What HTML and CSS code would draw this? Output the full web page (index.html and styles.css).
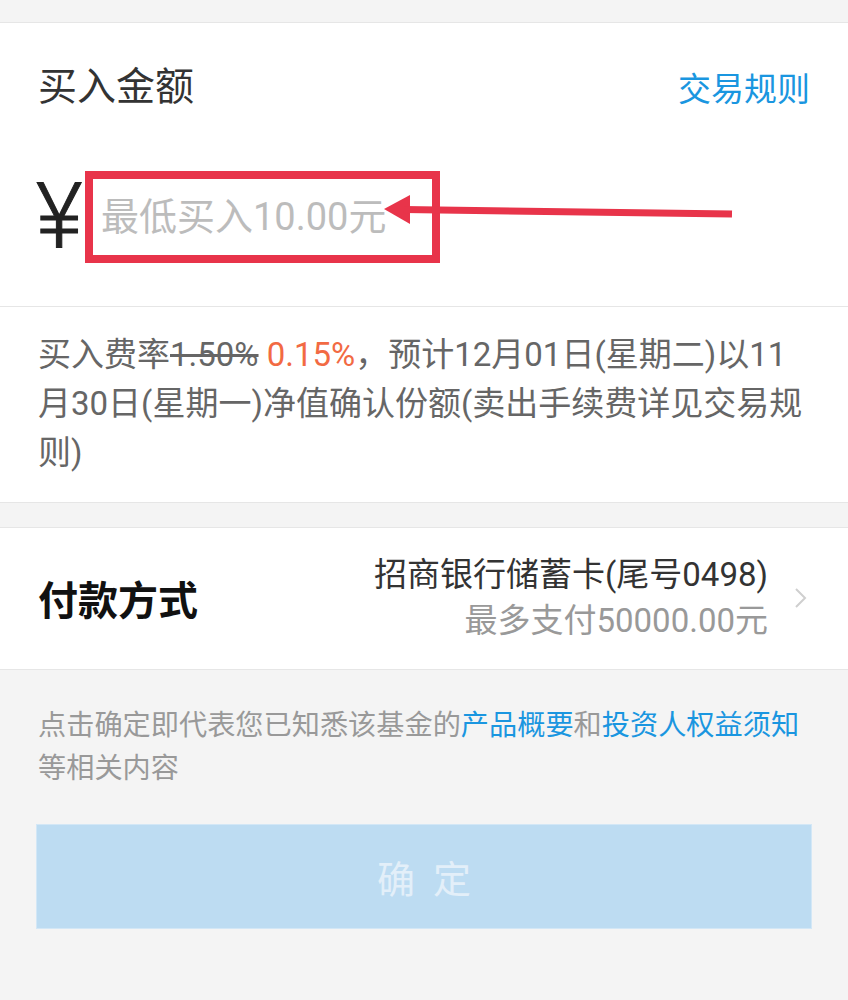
FILE: index.html
```html
<!DOCTYPE html>
<html lang="zh-CN">
<head>
    <meta charset="UTF-8">
    <meta name="viewport" content="width=device-width, initial-scale=1.0">
    <title>买入</title>
    <link rel="stylesheet" href="styles.css">
</head>
<body>
    <div class="top-gap"></div>

    <div class="card amount-card">
        <div class="title-row">
            <span class="title">买入金额</span>
            <span class="rule-link">交易规则</span>
        </div>
        <div class="amount-row">
            <span class="yen">¥</span>
            <div class="amount-input">最低买入10.00元</div>
            <svg class="arrow" width="360" height="40" viewBox="0 0 360 40">
                <polygon points="0,14 26,0 26,29" fill="#e8344a"/>
                <line x1="20" y1="14.5" x2="348" y2="19" stroke="#e8344a" stroke-width="7"/>
            </svg>
        </div>
    </div>

    <div class="card fee-card">
        买入费率<s>1.50%</s> <span class="rate">0.15%</span>，预计12月01日(星期二)以11月30日(星期一)净值确认份额(卖出手续费详见交易规则)
    </div>

    <div class="card pay-card">
        <span class="pay-label">付款方式</span>
        <div class="pay-info">
            <div class="pay-bank">招商银行储蓄卡(尾号0498)</div>
            <div class="pay-limit">最多支付50000.00元</div>
        </div>
        <svg class="chevron" width="14" height="22" viewBox="0 0 14 22">
            <polyline points="2,2 11,11 2,20" fill="none" stroke="#cfcfcf" stroke-width="2"/>
        </svg>
    </div>

    <p class="notice">点击确定即代表您已知悉该基金的<span class="link">产品概要</span>和<span class="link">投资人权益须知</span>等相关内容</p>

    <button class="confirm">确定</button>
</body>
</html>
```

FILE: styles.css
```css
body {
    margin: 0;
    background: #f4f4f4;
    font-family: Roboto, "Noto Sans CJK SC", sans-serif;
    color: #333;
}
.top-gap {
    height: 22px;
    border-bottom: 1px solid #e6e6e6;
}
.card {
    background: #fff;
    border-bottom: 1px solid #e6e6e6;
}
.amount-card {
    padding: 44px 38px 43px 38px;
}
.title-row {
    display: flex;
    justify-content: space-between;
    align-items: center;
    height: 40px;
}
.title {
    font-size: 39px;
    line-height: 40px;
    color: #333;
}
.rule-link {
    font-size: 33px;
    color: #1a96e0;
}
.amount-row {
    position: relative;
    display: flex;
    align-items: center;
    height: 92px;
    margin-top: 64px;
}
.yen {
    font-size: 90px;
    font-weight: 300;
    line-height: 92px;
    color: #222;
    width: 47px;
    margin-left: -2px;
    margin-right: 2px;
    -webkit-text-stroke: 1px #222;
}
.amount-input {
    box-sizing: border-box;
    width: 355px;
    height: 92px;
    border: 8px solid #e8344a;
    padding-left: 8px;
    font-size: 38px;
    line-height: 76px;
    color: #bcbcbc;
}
.arrow {
    position: absolute;
    left: 346px;
    top: 24px;
}
.fee-card {
    padding: 23px 38px 25px 38px;
    font-size: 33px;
    line-height: 49px;
    color: #666;
}
.fee-card s {
    text-decoration-thickness: 3px;
}
.rate {
    color: #f26a43;
}
.pay-card {
    margin-top: 24px;
    border-top: 1px solid #e6e6e6;
    padding: 24px 40px 25px 38px;
    display: flex;
    align-items: center;
}
.pay-label {
    flex: 1;
    font-size: 40px;
    font-weight: 700;
    color: #111;
}
.pay-info {
    text-align: right;
    font-size: 33px;
    line-height: 46px;
}
.pay-bank {
    color: #333;
}
.pay-limit {
    color: #999;
}
.chevron {
    margin-left: 26px;
}
.notice {
    margin: 0;
    padding: 34px 38px 0 38px;
    font-size: 28.2px;
    line-height: 43px;
    color: #999;
}
.link {
    color: #1a96e0;
}
.confirm {
    display: block;
    box-sizing: border-box;
    width: 776px;
    height: 105px;
    margin: 34px 0 0 36px;
    background: #bddcf2;
    border: 1px solid #d3e7f6;
    color: #e3eff9;
    font-family: Roboto, "Noto Sans CJK SC", sans-serif;
    font-size: 38px;
    letter-spacing: 18px;
    padding: 0 0 0 18px;
}
```
